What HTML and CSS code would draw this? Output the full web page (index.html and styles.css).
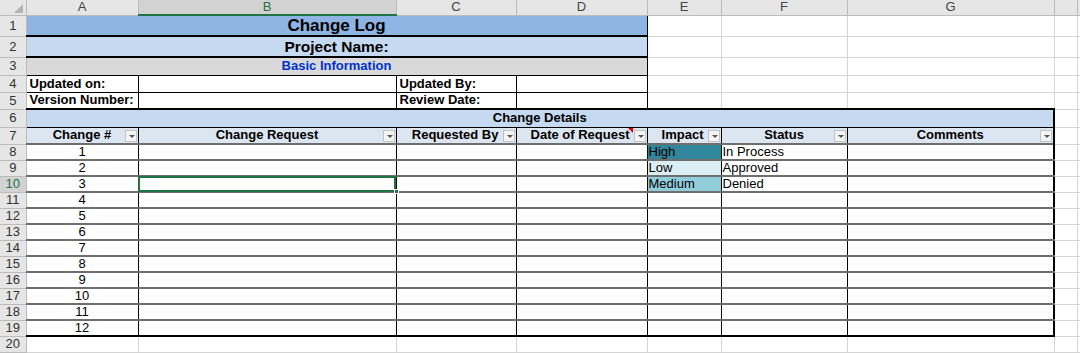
FILE: index.html
```html
<!DOCTYPE html>
<html>
<head>
<meta charset="utf-8">
<link rel="stylesheet" href="styles.css">
</head>
<body>
<table class="sheet">
  <colgroup>
    <col class="c-rh"><col class="c-a"><col class="c-b"><col class="c-c"><col class="c-d"><col class="c-e"><col class="c-f"><col class="c-g"><col class="c-h"><col class="c-i">
  </colgroup>
  <tr class="r-colhdr">
    <th class="corner"><span class="tri"></span></th>
    <th class="ch">A</th><th class="ch sel">B</th><th class="ch">C</th><th class="ch">D</th><th class="ch">E</th><th class="ch">F</th><th class="ch">G</th><th class="ch"></th><th class="ch"></th>
  </tr>
  <tr class="r1">
    <th class="rh">1</th>
    <td colspan="4" class="title">Change Log</td>
    <td class="g"></td><td class="g"></td><td class="g"></td><td class="g"></td><td class="g"></td>
  </tr>
  <tr class="r2">
    <th class="rh">2</th>
    <td colspan="4" class="project">Project Name:</td>
    <td class="g"></td><td class="g"></td><td class="g"></td><td class="g"></td><td class="g"></td>
  </tr>
  <tr class="r3">
    <th class="rh">3</th>
    <td colspan="4" class="basic">Basic Information</td>
    <td class="g"></td><td class="g"></td><td class="g"></td><td class="g"></td><td class="g"></td>
  </tr>
  <tr class="r4">
    <th class="rh">4</th>
    <td class="lbl la">Updated on:</td><td class="val"></td><td class="lbl">Updated By:</td><td class="val ld"></td>
    <td class="g"></td><td class="g"></td><td class="g"></td><td class="g"></td><td class="g"></td>
  </tr>
  <tr class="r5">
    <th class="rh">5</th>
    <td class="lbl la">Version Number:</td><td class="val"></td><td class="lbl">Review Date:</td><td class="val ld"></td>
    <td class="g"></td><td class="g"></td><td class="g"></td><td class="g"></td><td class="g"></td>
  </tr>
  <tr class="r6">
    <th class="rh">6</th>
    <td colspan="7" class="details">Change Details</td>
    <td class="g"></td><td class="g"></td>
  </tr>
  <tr class="r7">
    <th class="rh">7</th>
    <td class="hd la"><span class="hdt">Change #</span><span class="dd"></span></td>
    <td class="hd"><span class="hdt">Change Request</span><span class="dd"></span></td>
    <td class="hd hr"><span class="hdt">Requested By</span><span class="dd"></span></td>
    <td class="hd hr"><span class="hdt">Date of Request</span><span class="cmt"></span><span class="dd"></span></td>
    <td class="hd hr"><span class="hdt">Impact</span><span class="dd"></span></td>
    <td class="hd"><span class="hdt">Status</span><span class="dd"></span></td>
    <td class="hd lg"><span class="hdt">Comments</span><span class="dd"></span></td>
    <td class="g"></td><td class="g"></td>
  </tr>
  <tr class="dr">
    <th class="rh">8</th>
    <td class="num la">1</td><td class="d"></td><td class="d"></td><td class="d"></td><td class="d imp high">High</td><td class="d st">In Process</td><td class="d lg"></td>
    <td class="g"></td><td class="g"></td>
  </tr>
  <tr class="dr">
    <th class="rh">9</th>
    <td class="num la">2</td><td class="d"></td><td class="d"></td><td class="d"></td><td class="d imp low">Low</td><td class="d st">Approved</td><td class="d lg"></td>
    <td class="g"></td><td class="g"></td>
  </tr>
  <tr class="dr">
    <th class="rh rsel">10</th>
    <td class="num la">3</td><td class="d active"><span class="handle"></span></td><td class="d"></td><td class="d"></td><td class="d imp med">Medium</td><td class="d st">Denied</td><td class="d lg"></td>
    <td class="g"></td><td class="g"></td>
  </tr>
  <tr class="dr">
    <th class="rh">11</th>
    <td class="num la">4</td><td class="d"></td><td class="d"></td><td class="d"></td><td class="d"></td><td class="d"></td><td class="d lg"></td>
    <td class="g"></td><td class="g"></td>
  </tr>
  <tr class="dr">
    <th class="rh">12</th>
    <td class="num la">5</td><td class="d"></td><td class="d"></td><td class="d"></td><td class="d"></td><td class="d"></td><td class="d lg"></td>
    <td class="g"></td><td class="g"></td>
  </tr>
  <tr class="dr">
    <th class="rh">13</th>
    <td class="num la">6</td><td class="d"></td><td class="d"></td><td class="d"></td><td class="d"></td><td class="d"></td><td class="d lg"></td>
    <td class="g"></td><td class="g"></td>
  </tr>
  <tr class="dr">
    <th class="rh">14</th>
    <td class="num la">7</td><td class="d"></td><td class="d"></td><td class="d"></td><td class="d"></td><td class="d"></td><td class="d lg"></td>
    <td class="g"></td><td class="g"></td>
  </tr>
  <tr class="dr">
    <th class="rh">15</th>
    <td class="num la">8</td><td class="d"></td><td class="d"></td><td class="d"></td><td class="d"></td><td class="d"></td><td class="d lg"></td>
    <td class="g"></td><td class="g"></td>
  </tr>
  <tr class="dr">
    <th class="rh">16</th>
    <td class="num la">9</td><td class="d"></td><td class="d"></td><td class="d"></td><td class="d"></td><td class="d"></td><td class="d lg"></td>
    <td class="g"></td><td class="g"></td>
  </tr>
  <tr class="dr">
    <th class="rh">17</th>
    <td class="num la">10</td><td class="d"></td><td class="d"></td><td class="d"></td><td class="d"></td><td class="d"></td><td class="d lg"></td>
    <td class="g"></td><td class="g"></td>
  </tr>
  <tr class="dr">
    <th class="rh">18</th>
    <td class="num la">11</td><td class="d"></td><td class="d"></td><td class="d"></td><td class="d"></td><td class="d"></td><td class="d lg"></td>
    <td class="g"></td><td class="g"></td>
  </tr>
  <tr class="dr last">
    <th class="rh">19</th>
    <td class="num la">12</td><td class="d"></td><td class="d"></td><td class="d"></td><td class="d"></td><td class="d"></td><td class="d lg"></td>
    <td class="g"></td><td class="g"></td>
  </tr>
  <tr class="r20">
    <th class="rh">20</th>
    <td class="g"></td><td class="g"></td><td class="g"></td><td class="g"></td><td class="g"></td><td class="g"></td><td class="g"></td><td class="g"></td><td class="g"></td>
  </tr>
</table>
</body>
</html>
```

FILE: styles.css
```css
html, body {
  margin: 0;
  padding: 0;
  background: #ffffff;
  overflow: hidden;
  width: 1080px;
  height: 353px;
}

.sheet {
  border-collapse: collapse;
  table-layout: fixed;
  width: 1097px;
  font-family: "Liberation Sans", Arial, sans-serif;
  font-size: 13px;
  color: #000;
}

.c-rh { width: 26px; }
.c-a { width: 112px; }
.c-b { width: 258px; }
.c-c { width: 120px; }
.c-d { width: 131px; }
.c-e { width: 74px; }
.c-f { width: 126px; }
.c-g { width: 207px; }
.c-h { width: 23px; }
.c-i { width: 20px; }

td, th {
  padding: 0 2px;
  line-height: 14px;
  white-space: nowrap;
  overflow: visible;
  border: 1px solid #d4d4d4;
  font-weight: normal;
}

/* column headers */
.r-colhdr { height: 15px; }
.ch {
  background: #e6e6e6;
  color: #444;
  font-size: 13px;
  text-align: center;
  border-color: #bcbcbc;
  border-top: none;
  font-weight: normal;
}
.ch.sel {
  background: #d2d2d2;
  color: #217346;
  border-bottom: 2px solid #217346;
}
.corner {
  background: #e6e6e6;
  border-color: #bcbcbc;
  border-top: none;
  border-left: none;
  position: relative;
}
.tri {
  position: absolute;
  right: 3px;
  bottom: 2px;
  width: 0;
  height: 0;
  border-left: 9px solid transparent;
  border-bottom: 9px solid #b4b4b4;
}

/* row headers */
.rh {
  background: #e6e6e6;
  color: #333;
  font-size: 13px;
  text-align: center;
  padding: 0;
  border-color: #bcbcbc;
  border-left: none;
}
.rh.rsel {
  background: #d2d2d2;
  color: #217346;
}

.g { background: #fff; }

.r1 { height: 21px; }
.r2 { height: 21px; }
.r3 { height: 18px; }
.r4, .r5 { height: 17px; }
.r6 { height: 18px; }
.r7 { height: 17px; }
.dr, .r20 { height: 16px; }

.title {
  background: #8db4e2;
  font-weight: bold;
  font-size: 17px;
  text-align: center;
  border: 1px solid #000;
  border-bottom: 2px solid #000;
}
.project {
  background: #c5d9f1;
  font-weight: bold;
  font-size: 15.5px;
  text-align: center;
  border: 1px solid #000;
  border-bottom: 2px solid #000;
}
.basic {
  background: #d9d9d9;
  color: #0033cc;
  font-weight: bold;
  font-size: 13px;
  text-align: center;
  border: 1px solid #000;
  border-top: 2px solid #000;
}
.lbl {
  font-weight: bold;
  border: 1px solid #000;
  padding-left: 3px;
}
.val {
  border: 1px solid #000;
}
.la { border-left: 1px solid #000; }
.ld { border-right: 1px solid #000; }
.r5 .lbl, .r5 .val { border-bottom: 2px solid #000; }

.details {
  background: #c5d9f1;
  font-weight: bold;
  text-align: center;
  border: 1px solid #000;
  border-top: 2px solid #000;
  border-right: 2px solid #000;
}

.hd {
  background: #dce6f1;
  font-weight: bold;
  text-align: center;
  border: 1px solid #000;
  position: relative;
  padding: 0 2px;
}
.hd.hr {
  text-align: right;
  padding-right: 17px;
}
.hd.lg { border-right: 2px solid #000; }
.hdt { display: inline-block; }
.dd {
  position: absolute;
  right: 1px;
  top: 2px;
  width: 12px;
  height: 12px;
  box-sizing: border-box;
  background: #f3f3f3;
  border: 1px solid #c4c4c4;
}
.dd::after {
  content: "";
  position: absolute;
  left: 3px;
  top: 4px;
  width: 0;
  height: 0;
  border-left: 3px solid transparent;
  border-right: 3px solid transparent;
  border-top: 3px solid #555;
}
.cmt {
  position: absolute;
  right: 14px;
  top: 0;
  width: 0;
  height: 0;
  border-left: 5px solid transparent;
  border-top: 5px solid #e00000;
}

.num {
  text-align: center;
  border: 1px solid #000;
  border-top: 2px solid #6e6e6e;
  border-bottom: 2px solid #6e6e6e;
}
.d {
  border: 1px solid #000;
  border-top: 2px solid #6e6e6e;
  border-bottom: 2px solid #6e6e6e;
  position: relative;
}
.d.lg { border-right: 2px solid #000; }
.dr.last .num, .dr.last .d { border-bottom: 2px solid #000; }

.imp { padding-left: 1px; }
.high { background: #31869b; }
.low { background: #daeef3; }
.med { background: #92cddc; }
.st { padding-left: 1px; }

.active {
  outline: 2px solid #217346;
  outline-offset: -2px;
}
.handle {
  position: absolute;
  right: -3px;
  bottom: -3px;
  width: 5px;
  height: 5px;
  background: #217346;
  border: 1px solid #fff;
  box-sizing: border-box;
}
```
